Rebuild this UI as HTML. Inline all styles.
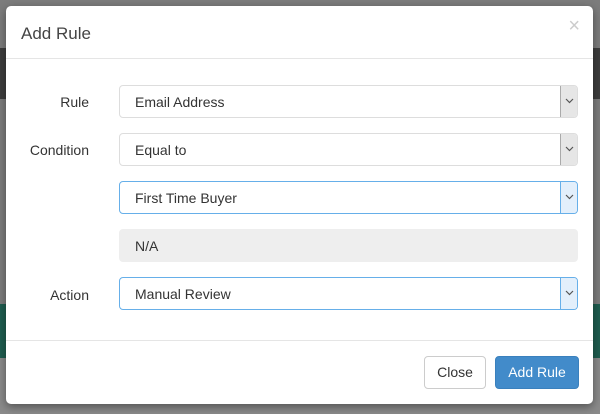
<!DOCTYPE html>
<html><head><style>
*{box-sizing:border-box;margin:0;padding:0}
body{width:600px;height:414px;position:relative;overflow:hidden;background:#7c7c7c;font-family:"Liberation Sans",sans-serif;font-size:14px;color:#333}
.band{position:absolute;left:0;width:600px}
.modal{position:absolute;left:6px;top:6px;width:587px;height:398px;background:#fff;border-radius:5px;box-shadow:0 3px 9px rgba(0,0,0,.4)}
.hdr{position:absolute;left:0;top:0;width:100%;height:53px;border-bottom:1px solid #e5e5e5}
.title{position:absolute;left:15px;top:18px;font-size:17px;color:#444}
.x{position:absolute;right:13px;top:9px;font-size:20px;color:#ccc}
.lbl{position:absolute;right:504px;font-size:14px;color:#333;text-align:right}
.inp{position:absolute;left:113px;width:459px;height:33px;border:1px solid #ddd;border-radius:4px;padding:8px 15px;font-size:14px;color:#333;background:#fff}
.inp.f{border-color:#66afe9}
.inp.d{background:#eee;border-color:#eee}
.arr{position:absolute;right:0;top:0;width:17px;height:31px;background:#e6e6e6;border-left:1px solid #aaa;border-radius:0 3px 3px 0}
.f .arr{background:#e3effb;border-left:1px solid #66afe9}
.arr svg{position:absolute;left:4px;top:12px}
.ftr{position:absolute;left:0;top:334px;width:100%;border-top:1px solid #e5e5e5}
.btn{position:absolute;top:350px;height:33px;border-radius:4px;font-size:14px;text-align:center;line-height:31px}
</style></head><body>
<div class="band" style="top:48px;height:51px;background:#3d3d3d"></div>
<div class="band" style="top:304px;height:54px;background:#1f5d4f"></div>
<div class="band" style="top:358px;height:56px;background:#8a8a8a"></div>
<div class="modal">
<div class="hdr"><div class="title">Add Rule</div><div class="x">×</div></div>
<div class="lbl" style="top:88px">Rule</div>
<div class="inp" style="top:79px">Email Address<div class="arr"><svg width="9" height="6"><path d="M1 1l3.5 3.5L8 1" stroke="#555" fill="none" stroke-width="1.2"/></svg></div></div>
<div class="lbl" style="top:136px">Condition</div>
<div class="inp" style="top:127px">Equal to<div class="arr"><svg width="9" height="6"><path d="M1 1l3.5 3.5L8 1" stroke="#555" fill="none" stroke-width="1.2"/></svg></div></div>
<div class="inp f" style="top:175px">First Time Buyer<div class="arr"><svg width="9" height="6"><path d="M1 1l3.5 3.5L8 1" stroke="#555" fill="none" stroke-width="1.2"/></svg></div></div>
<div class="inp d" style="top:223px">N/A</div>
<div class="lbl" style="top:281px">Action</div>
<div class="inp f" style="top:271px">Manual Review<div class="arr"><svg width="9" height="6"><path d="M1 1l3.5 3.5L8 1" stroke="#555" fill="none" stroke-width="1.2"/></svg></div></div>
<div class="ftr"></div>
<div class="btn" style="left:418px;width:62px;border:1px solid #ccc;color:#333;background:#fff">Close</div>
<div class="btn" style="left:489px;width:84px;background:#428bca;border:1px solid #3a80bd;color:#fff">Add Rule</div>
</div>
</body></html>
